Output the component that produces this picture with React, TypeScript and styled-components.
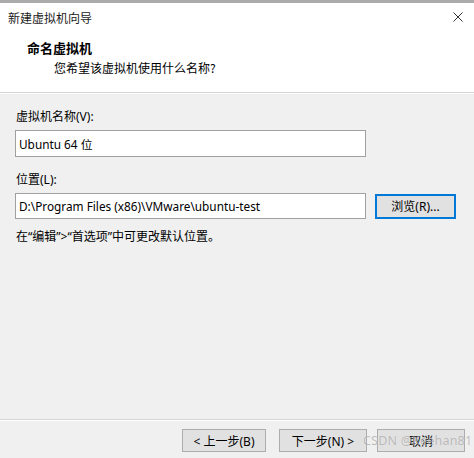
import React from "react";
import styled, { createGlobalStyle } from "styled-components";

const Global = createGlobalStyle`
  html, body { margin: 0; padding: 0; background: #f0f0f0; }
  body { font-family: "Noto Sans", "Noto Sans CJK SC", sans-serif; font-size: 12px; color: #000; }
  * { box-sizing: border-box; }
`;

const Window = styled.div`
  width: 474px;
  height: 458px;
  display: flex;
  flex-direction: column;
  background: #f0f0f0;
  position: relative;
  overflow: hidden;
`;

const TopStrip = styled.div`
  height: 3px;
  background: #ababab;
`;

const Header = styled.div`
  height: 89px;
  background: #ffffff;
  display: flex;
  flex-direction: column;
`;

const TitleBar = styled.div`
  height: 28px;
  display: flex;
  align-items: center;
  justify-content: space-between;
  padding: 0 8px 0 8px;
  font-family: "Noto Sans CJK SC", sans-serif;
  font-size: 12px;
  color: #1a1a1a;
`;

const CloseBtn = styled.div`
  width: 16px;
  height: 16px;
  display: flex;
  align-items: center;
  justify-content: center;
`;

const Heading = styled.div`
  margin: 8px 0 0 27px;
  font-family: "Noto Sans CJK SC", sans-serif;
  font-weight: 700;
  font-size: 13px;
  line-height: 18px;
`;

const SubHeading = styled.div`
  margin: 3px 0 0 54px;
  font-family: "Noto Sans CJK SC", sans-serif;
  font-size: 12px;
  line-height: 16px;
`;

const Separator = styled.div`
  height: 2px;
  background: #d5d5d5;
  border-bottom: 1px solid #ffffff;
`;

const Body = styled.div`
  flex: 1;
  display: flex;
  flex-direction: column;
  padding: 15px 0 0 15px;
`;

const Label = styled.div<{ $gap?: number }>`
  margin-top: ${(p) => p.$gap ?? 0}px;
  margin-left: 1px;
  font-family: "Noto Sans", "Noto Sans CJK SC", sans-serif;
  font-size: 12px;
  line-height: 16px;
`;

const Row = styled.div`
  display: flex;
  align-items: center;
  margin-top: 5px;
`;

const TextBox = styled.div<{ $h: number }>`
  width: 351px;
  height: ${(p) => p.$h}px;
  background: #ffffff;
  border: 1px solid #a0a0a0;
  display: flex;
  align-items: center;
  padding-left: 3px;
  font-family: "Noto Sans", "Noto Sans CJK SC", sans-serif;
  font-size: 11.8px;
  color: #000;
`;

const Button = styled.div<{ $w: number; $focus?: boolean }>`
  width: ${(p) => p.$w}px;
  height: ${(p) => (p.$focus ? 25 : 23)}px;
  background: #e1e1e1;
  border: ${(p) => (p.$focus ? "2px solid #0078d7" : "1px solid #adadad")};
  display: flex;
  align-items: center;
  justify-content: center;
  font-family: "Noto Sans", "Noto Sans CJK SC", sans-serif;
  font-size: 12px;
  color: #000;
`;

const BrowseWrap = styled.div`
  margin-left: 9px;
`;

const Hint = styled.div`
  margin-top: 10px;
  margin-left: 1px;
  font-family: "Noto Sans", "Noto Sans CJK SC", sans-serif;
  font-size: 12px;
  line-height: 16px;
`;

const Footer = styled.div`
  height: 37px;
  display: flex;
  justify-content: flex-end;
  align-items: flex-start;
  padding: 8px 9px 0 0;
  gap: 10px;
`;

const BackWrap = styled.div`
  margin-right: 3px;
`;

const Watermark = styled.div`
  position: absolute;
  left: 363px;
  top: 432px;
  font-family: "Noto Sans", sans-serif;
  font-size: 12.5px;
  color: rgba(130, 130, 130, 0.5);
  letter-spacing: 0.2px;
  pointer-events: none;
  white-space: nowrap;
  text-shadow: 0 0 1px rgba(255, 255, 255, 0.6);
`;

export default function App() {
  return (
    <>
      <Global />
      <Window>
        <TopStrip />
        <Header>
          <TitleBar>
            <span>新建虚拟机向导</span>
            <CloseBtn>
              <svg width="10" height="10" viewBox="0 0 10 10">
                <path d="M0.5 0.5 L9.5 9.5 M9.5 0.5 L0.5 9.5" stroke="#333" strokeWidth="1" />
              </svg>
            </CloseBtn>
          </TitleBar>
          <Heading>命名虚拟机</Heading>
          <SubHeading>您希望该虚拟机使用什么名称?</SubHeading>
        </Header>
        <Separator />
        <Body>
          <Label>虚拟机名称(V):</Label>
          <Row>
            <TextBox $h={27}>Ubuntu 64 位</TextBox>
          </Row>
          <Label $gap={15}>位置(L):</Label>
          <Row>
            <TextBox $h={26}>D:\Program Files (x86)\VMware\ubuntu-test</TextBox>
            <BrowseWrap>
              <Button $w={81} $focus>浏览(R)...</Button>
            </BrowseWrap>
          </Row>
          <Hint>在“编辑”&gt;“首选项”中可更改默认位置。</Hint>
        </Body>
        <Separator />
        <Footer>
          <BackWrap>
            <Button $w={84}>&lt; 上一步(B)</Button>
          </BackWrap>
          <Button $w={88}>下一步(N) &gt;</Button>
          <Button $w={88}>取消</Button>
        </Footer>
        <Watermark>CSDN @Keehan81</Watermark>
      </Window>
    </>
  );
}
